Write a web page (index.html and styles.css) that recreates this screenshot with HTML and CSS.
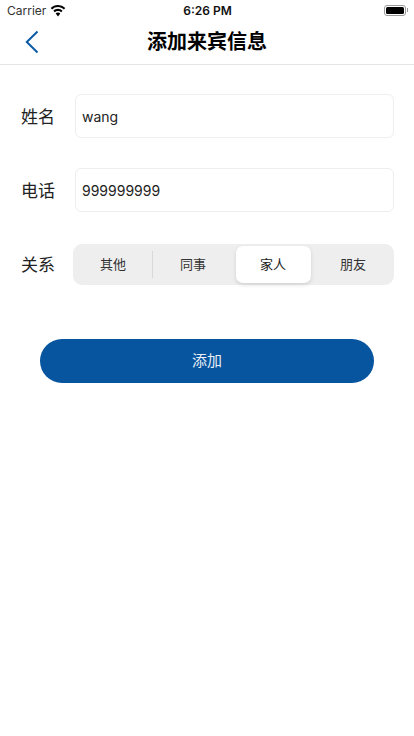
FILE: index.html
```html
<!DOCTYPE html>
<html lang="zh">
<head>
<meta charset="utf-8">
<title>添加来宾信息</title>
<link rel="stylesheet" href="styles.css">
</head>
<body>
<div class="status">
  <div class="status-left">
    <span>Carrier</span>
    <svg class="wifi" width="16" height="12" viewBox="0 0 16 12"><path d="M8 0C5.200 0 2.600 1.100.7 3l1.400 1.500A8.300 8.300 0 0 1 8 2.100c2.300 0 4.400.9 5.900 2.400L15.300 3A10.300 10.300 0 0 0 8 0z"/><path d="M8 3.800c-1.800 0-3.400.7-4.600 1.900l1.400 1.500A4.500 4.500 0 0 1 8 5.900c1.200 0 2.400.5 3.200 1.300l1.400-1.500A6.500 6.500 0 0 0 8 3.800z"/><path d="M8 7.600c-.9 0-1.700.4-2.300 1L8 11.500l2.300-2.900c-.6-.6-1.400-1-2.300-1z"/></svg>
  </div>
  <div class="status-time">6:26 PM</div>
  <div class="status-right">
    <span class="battery"><span class="battery-fill"></span></span><span class="battery-cap"></span>
  </div>
</div>
<header class="nav">
  <svg class="back" width="14" height="24" viewBox="0 0 14 24"><path d="M12.500 1.500 1.800 12l10.700 10.500"/></svg>
  <h1>添加来宾信息</h1>
</header>
<main class="form">
  <div class="row">
    <span class="label">姓名</span>
    <div class="field">wang</div>
  </div>
  <div class="row">
    <span class="label">电话</span>
    <div class="field">999999999</div>
  </div>
  <div class="row row-seg">
    <span class="label">关系</span>
    <div class="segments">
      <span class="seg">其他</span>
      <span class="seg seg-divided">同事</span>
      <span class="seg seg-active">家人</span>
      <span class="seg">朋友</span>
    </div>
  </div>
  <button class="submit" type="button">添加</button>
</main>
</body>
</html>
```
FILE: styles.css
```css
* { box-sizing: border-box; }
html, body { margin: 0; padding: 0; }
body {
  width: 414px;
  height: 736px;
  overflow: hidden;
  background: #fff;
  color: #000;
  font-family: "Inter", "Noto Sans CJK SC", sans-serif;
}
.status {
  height: 20px;
  display: grid;
  grid-template-columns: 1fr auto 1fr;
  align-items: center;
  padding: 0 6px 0 7px;
  font-size: 12px;
  color: #111;
}
.status-left { display: flex; align-items: center; gap: 4px; color: #333; }
.wifi { fill: #000; margin-top: 2px; }
.status-time { font-weight: 600; font-size: 12px; }
.status-right { display: flex; justify-content: flex-end; align-items: center; }
.battery {
  width: 22px;
  height: 11px;
  border: 1px solid #9a9a9a;
  border-radius: 3px;
  padding: 1px;
  display: flex;
}
.battery-fill { flex: 1; background: #000; border-radius: 1.500px; }
.battery-cap { width: 1px; height: 4px; background: #9a9a9a; margin-left: 1px; }
.nav {
  height: 45px;
  position: relative;
  display: flex;
  align-items: center;
  justify-content: center;
  border-bottom: 1px solid #e4e4e4;
}
.back {
  position: absolute;
  left: 25px;
  top: 10px;
  fill: none;
  stroke: #0a5aa6;
  stroke-width: 2;
}
.nav h1 {
  margin: 0;
  font-size: 20px;
  line-height: 24px;
  font-weight: 700;
  color: #000;
}
.form {
  display: flex;
  flex-direction: column;
  align-items: flex-start;
  gap: 30px;
  padding: 29px 20px 0 20px;
}
.row {
  display: flex;
  align-items: center;
  height: 44px;
}
.row-seg { height: 41px; margin: 2px 0 24px; }
.label {
  width: 55px;
  flex: none;
  padding: 0 0 2px 1px;
  font-size: 17px;
  color: #222;
}
.field {
  width: 319px;
  height: 44px;
  padding: 0 6px;
  display: flex;
  align-items: center;
  background: #fff;
  border: 1px solid #eeeeee;
  border-radius: 6px;
  font-size: 14px;
  color: #222;
}
.segments {
  width: 321px;
  height: 41px;
  margin-left: -2px;
  display: grid;
  grid-template-columns: repeat(4, 80px);
  background: #eeeeee;
  border-radius: 9px;
}
.seg {
  display: flex;
  align-items: center;
  justify-content: center;
  padding-bottom: 2px;
  font-size: 13px;
  color: #333;
  position: relative;
}
.seg-divided::before {
  content: "";
  position: absolute;
  left: -1px;
  top: 7px;
  bottom: 7px;
  width: 1px;
  background: #d8d8d8;
}
.seg-active {
  margin: 2px 2.500px;
  background: #fff;
  border-radius: 7px;
  box-shadow: 0 2px 4px rgba(0, 0, 0, 0.12);
  color: #222;
}
.submit {
  display: block;
  width: 334px;
  height: 44px;
  margin: 0 0 0 20px;
  border: 0;
  border-radius: 22px;
  background: #07559f;
  color: #e8eef6;
  font-family: inherit;
  font-size: 15px;
  padding: 0 0 4px;
}
```
